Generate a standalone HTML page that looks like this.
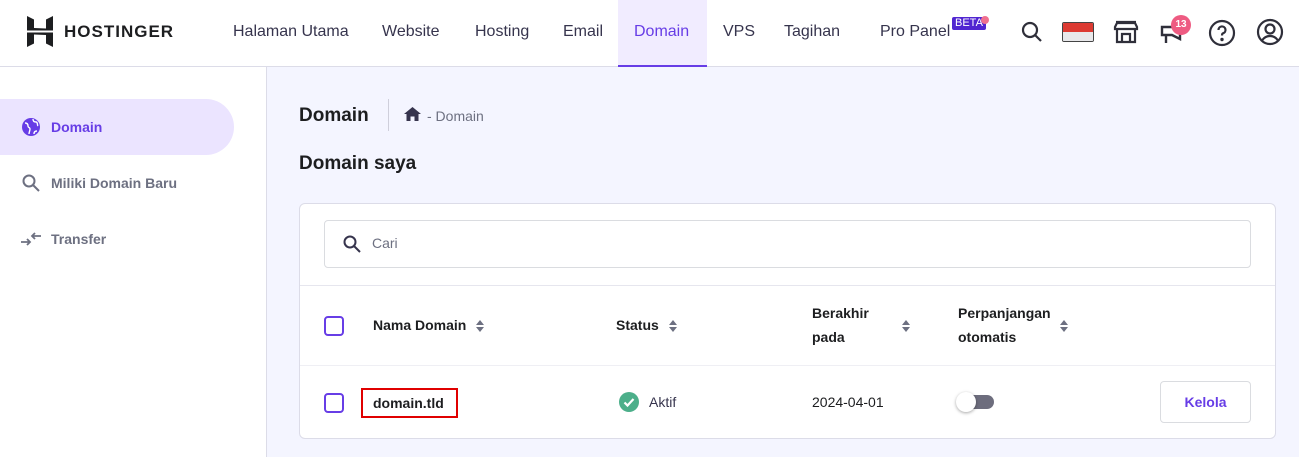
<!DOCTYPE html>
<html><head><meta charset="utf-8"><style>
*{box-sizing:border-box;margin:0;padding:0}
body{width:1299px;height:457px;overflow:hidden;background:#f4f5ff;font-family:"Liberation Sans",sans-serif;color:#2f1c6a;position:relative}
.a{position:absolute}
.hdr{left:0;top:0;width:1299px;height:67px;background:#fff;border-bottom:1px solid #dcdce8}
.nav{top:23px;font-size:16px;color:#36344d;white-space:nowrap}
.side{left:0;top:67px;width:267px;height:390px;background:#fff;border-right:1px solid #dcdce8}
.si{font-size:14px;font-weight:bold;color:#6d7081}
.card{left:299px;top:203px;width:977px;height:236px;background:#fff;border:1px solid #dcdce8;border-radius:6px}
.th{font-size:14px;font-weight:bold;color:#1d1e20;line-height:24px}
.cb{width:20px;height:20px;border:2px solid #673de6;border-radius:4px}
.sort{width:8px;height:12px}
</style></head><body>
<div class="a hdr"></div>
<svg class="a" style="left:27px;top:16px" width="26" height="31" viewBox="0 0 26 31"><path d="M0 0l7 3.5v8.5l12 0.5v-9l7-3.5v14.5H0z M0 16.5h26V31l-7-3.5v-8.5l-12-0.5v9L0 31z" fill="#1d1e20"/></svg>
<div class="a" style="left:64px;top:22px;font-size:17px;font-weight:bold;letter-spacing:1px;color:#1d1e20">HOSTINGER</div>
<div class="a nav" style="left:233px">Halaman Utama</div>
<div class="a nav" style="left:382px">Website</div>
<div class="a nav" style="left:475px">Hosting</div>
<div class="a nav" style="left:563px">Email</div>
<div class="a" style="left:618px;top:0;width:89px;height:67px;background:#f1ecff;border-bottom:2px solid #673de6"></div>
<div class="a nav" style="left:634px;color:#673de6">Domain</div>
<div class="a nav" style="left:723px">VPS</div>
<div class="a nav" style="left:784px">Tagihan</div>
<div class="a nav" style="left:880px">Pro Panel</div>
<div class="a" style="left:952px;top:17px;background:#5025d1;color:#fff;font-size:11px;padding:0 3px;line-height:13px;border-radius:2px">BETA</div>
<div class="a" style="left:981px;top:16px;width:8px;height:8px;border-radius:50%;background:#f0708f"></div>
<svg class="a" style="left:1020px;top:20px" width="24" height="24" viewBox="0 0 24 24" fill="none" stroke="#2f2f3a" stroke-width="2.2"><circle cx="10" cy="10" r="7"/><path d="M15 15l6 6"/></svg>
<div class="a" style="left:1062px;top:22px;width:32px;height:20px;border:1px solid #444;border-radius:2px;overflow:hidden"><div style="height:9px;background:#dc3a32"></div><div style="height:11px;background:#e8e8ea"></div></div>
<svg class="a" style="left:1113px;top:19px" width="26" height="26" viewBox="0 0 26 26" fill="none" stroke="#2f2f3a" stroke-width="2.2"><path d="M3 3h20M2 8l2-4h18l2 4v2H2z M4 10v13h18V10 M9 23v-8h8v8"/></svg>
<svg class="a" style="left:1160px;top:21px" width="26" height="26" viewBox="0 0 26 26" fill="none" stroke="#2f2f3a" stroke-width="2.4"><path d="M2 6h10l8-4v16l-8-4H2z M6 14v8"/></svg>
<div class="a" style="left:1171px;top:15px;width:20px;height:20px;border-radius:50%;background:#ee5b82;color:#fff;font-size:10px;font-weight:bold;text-align:center;line-height:20px">13</div>
<svg class="a" style="left:1208px;top:19px" width="28" height="28" viewBox="0 0 28 28" fill="none" stroke="#2f2f3a" stroke-width="2.2"><circle cx="14" cy="14" r="12"/><path d="M10.5 11a3.5 3.5 0 1 1 4.5 3.3c-1 .4-1 1.2-1 2.2"/><circle cx="14" cy="20.5" r=".6" fill="#2f2f3a"/></svg>
<svg class="a" style="left:1256px;top:18px" width="28" height="28" viewBox="0 0 28 28" fill="none" stroke="#2f2f3a" stroke-width="2.2"><circle cx="14" cy="14" r="12"/><circle cx="14" cy="11" r="4.5"/><path d="M6 22.5c2-3 5-4.5 8-4.5s6 1.5 8 4.5"/></svg>

<div class="a side"></div>
<div class="a" style="left:0;top:99px;width:234px;height:56px;background:#ebe4ff;border-radius:0 28px 28px 0"></div>
<svg class="a" style="left:21px;top:117px" width="20" height="20" viewBox="0 0 20 20"><circle cx="10" cy="10" r="9" fill="#673de6"/><path d="M4 6c2 0 3 1 3 3s2 1 2 3-1 3-1 5M12 2c0 2 1 3 3 3s1 3 2 4M13 17c0-2 1-3 3-3" stroke="#fff" stroke-width="1.4" fill="none"/></svg>
<div class="a si" style="left:51px;top:119px;color:#673de6">Domain</div>
<svg class="a" style="left:22px;top:174px" width="18" height="18" viewBox="0 0 18 18" fill="none" stroke="#6d7081" stroke-width="2"><circle cx="7" cy="7" r="5.5"/><path d="M11 11l6 6"/></svg>
<div class="a si" style="left:51px;top:175px">Miliki Domain Baru</div>
<svg class="a" style="left:21px;top:232px" width="20" height="14" viewBox="0 0 20 14" fill="none" stroke="#6d7081" stroke-width="1.8"><path d="M0 10h8M6 7l3 3-3 3M20 4h-8M14 1l-3 3 3 3"/></svg>
<div class="a si" style="left:51px;top:231px">Transfer</div>

<div class="a" style="left:299px;top:105px;font-size:19px;font-weight:bold;color:#1d1e20">Domain</div>
<div class="a" style="left:388px;top:99px;width:1px;height:32px;background:#cfcfdb"></div>
<svg class="a" style="left:404px;top:107px" width="17" height="14" viewBox="0 0 17 14"><path d="M8.5 0L0 7h2.5v7h4v-4.5h4V14h4V7H17z" fill="#36344d"/></svg>
<div class="a" style="left:427px;top:108px;font-size:14px;color:#6d7081">- Domain</div>
<div class="a" style="left:299px;top:153px;font-size:19px;font-weight:bold;color:#1d1e20">Domain saya</div>

<div class="a card"></div>
<div class="a" style="left:324px;top:220px;width:927px;height:48px;border:1px solid #dadce0;border-radius:4px"></div>
<svg class="a" style="left:343px;top:235px" width="18" height="18" viewBox="0 0 18 18" fill="none" stroke="#36344d" stroke-width="2"><circle cx="7" cy="7" r="5.5"/><path d="M11 11l6 6"/></svg>
<div class="a" style="left:372px;top:235px;font-size:14px;color:#6d7081">Cari</div>
<div class="a" style="left:300px;top:285px;width:975px;height:1px;background:#e6e6ee"></div>
<div class="a" style="left:300px;top:365px;width:975px;height:1px;background:#efeff4"></div>

<div class="a cb" style="left:324px;top:316px"></div>
<div class="a th" style="left:373px;top:313px">Nama Domain</div>
<svg class="a sort" style="left:476px;top:320px" viewBox="0 0 8 12"><path d="M4 0l4 5H0zM4 12l4-5H0z" fill="#6d7081"/></svg>
<div class="a th" style="left:616px;top:313px">Status</div>
<svg class="a sort" style="left:669px;top:320px" viewBox="0 0 8 12"><path d="M4 0l4 5H0zM4 12l4-5H0z" fill="#6d7081"/></svg>
<div class="a th" style="left:812px;top:301px">Berakhir<br>pada</div>
<svg class="a sort" style="left:902px;top:320px" viewBox="0 0 8 12"><path d="M4 0l4 5H0zM4 12l4-5H0z" fill="#6d7081"/></svg>
<div class="a th" style="left:958px;top:301px">Perpanjangan<br>otomatis</div>
<svg class="a sort" style="left:1060px;top:320px" viewBox="0 0 8 12"><path d="M4 0l4 5H0zM4 12l4-5H0z" fill="#6d7081"/></svg>

<div class="a cb" style="left:324px;top:393px"></div>
<div class="a" style="left:361px;top:388px;width:97px;height:30px;border:2px solid #e00000"></div>
<div class="a" style="left:373px;top:395px;font-size:14px;font-weight:bold;color:#1d1e20">domain.tld</div>
<svg class="a" style="left:619px;top:392px" width="20" height="20" viewBox="0 0 20 20"><circle cx="10" cy="10" r="10" fill="#4caf8a"/><path d="M5.5 10.5l3 3 6-6.5" stroke="#fff" stroke-width="2.2" fill="none"/></svg>
<div class="a" style="left:649px;top:394px;font-size:14px;color:#36344d">Aktif</div>
<div class="a" style="left:812px;top:394px;font-size:14px;color:#1d1e20">2024-04-01</div>
<div class="a" style="left:958px;top:395px;width:36px;height:14px;border-radius:7px;background:#6d6d7d"></div>
<div class="a" style="left:956px;top:392px;width:20px;height:20px;border-radius:50%;background:#fff;box-shadow:0 1px 3px rgba(0,0,0,.35)"></div>
<div class="a" style="left:1160px;top:381px;width:91px;height:42px;border:1px solid #dadce0;border-radius:4px;font-size:14px;font-weight:bold;color:#673de6;text-align:center;line-height:40px">Kelola</div>
</body></html>
